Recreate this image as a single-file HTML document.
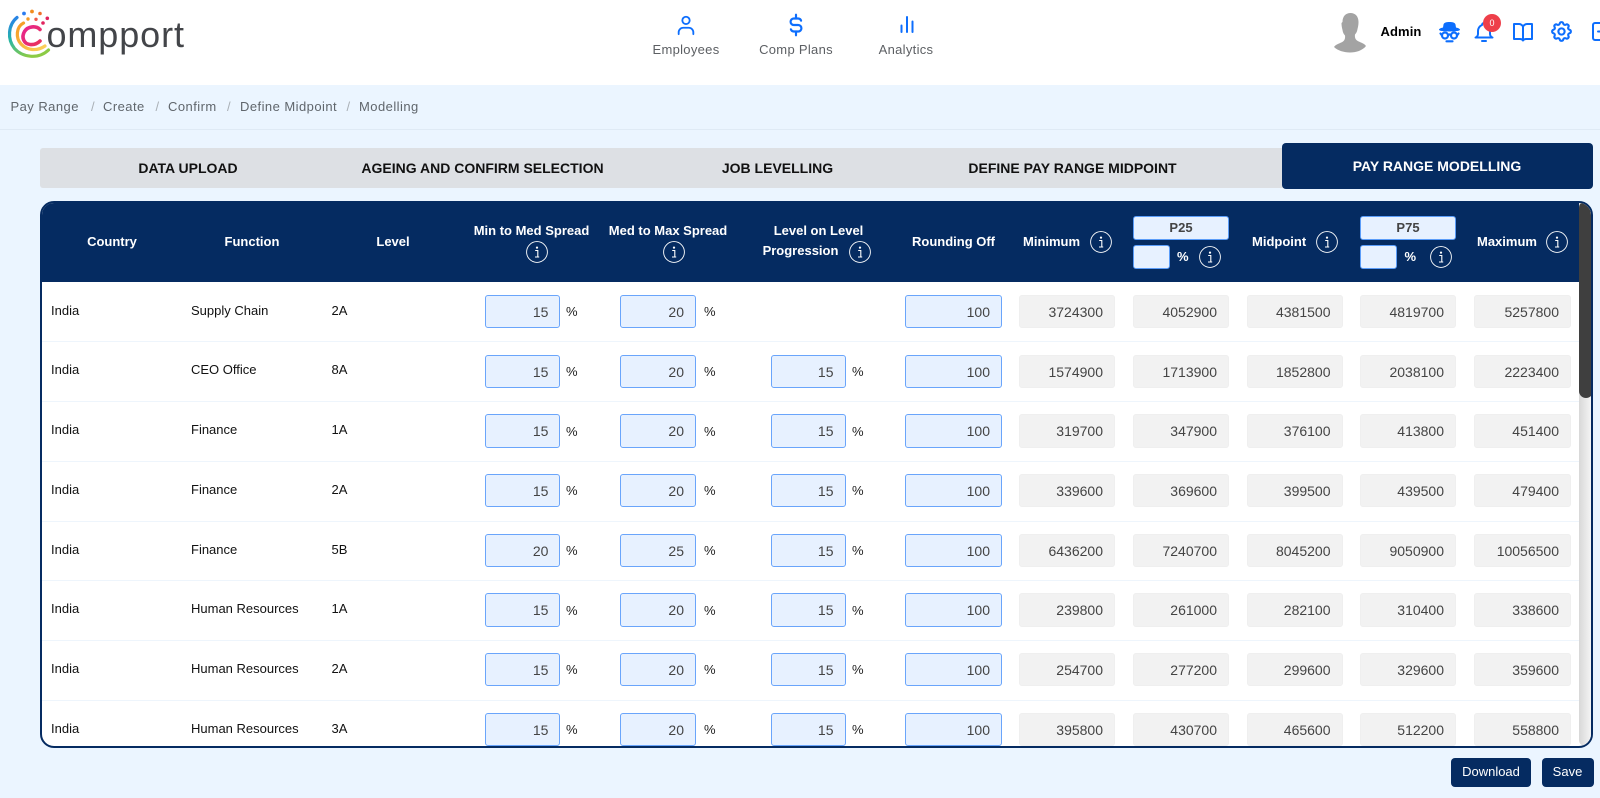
<!DOCTYPE html>
<html lang="en"><head><meta charset="utf-8"><title>Pay Range Modelling</title>
<style>
*{box-sizing:border-box;margin:0;padding:0}
html,body{width:1600px;height:798px;overflow:hidden}
body{background:#ebf5ff;font-family:"Liberation Sans",Arial,sans-serif;position:relative;color:#111}
.a{position:absolute;white-space:nowrap}
.hd{left:0;top:0;width:1600px;height:85px;background:#fff}
.nav{font-size:13px;letter-spacing:.3px;color:#5c5f63;top:42px;line-height:16px;transform:translateX(-50%)}
.bc{font-size:13px;letter-spacing:.45px;color:#60666c;top:99px;line-height:16px}
.bs{color:#a9afb5}
.tabbar{left:40px;top:148px;width:1250px;height:40px;background:#dde0e4;border-radius:3px 0 0 3px}
.tab{font-size:14px;font-weight:700;color:#111;top:160px;line-height:16px;transform:translateX(-50%)}
.act{left:1282px;top:143px;width:311px;height:46px;background:#052b61;border-radius:4px}
.tbl{left:40px;top:201px;width:1553px;height:547px;border:2px solid #052b61;border-radius:14px;overflow:hidden;background:#fff}
.th{left:0;top:0;width:1537px;height:78.7px;background:#052b61}
.h{font-size:13px;font-weight:700;color:#fff;line-height:16px}
.c{transform:translateX(-50%)}
.inf{position:absolute;width:22px;height:22px}
.hb{background:#e7f1ff;border:1px solid #5b9df9;border-radius:3px;color:#444;font-size:13px;font-weight:700;text-align:center}
.r{position:absolute;left:0;width:1537px;height:59.6px;border-top:1px solid #eef5fc}
.r>*{position:absolute}
.t{font-size:13px;line-height:16px;top:20px;color:#111;white-space:nowrap}
.i,.b{top:12.3px;height:33.3px;line-height:32px;font-size:14px;text-align:right;color:#444;padding-right:11px;border-radius:3px}
.i{background:#e7f1ff;border:1px solid #6aa5fb}
.b{width:96px;background:#f2f2f2;border:1px solid #efefef;padding-right:11px}
.p{font-size:13px;top:21.5px;line-height:16px;color:#222}
.i1{left:443.4px;width:75px}.i2{left:578px;width:76px}.i3{left:728.5px;width:75px}.i4{left:863px;width:97px}
.p1{left:524px}.p2{left:662px}.p3{left:810px}
.b1{left:977px}.b2{left:1091px}.b3{left:1204.5px}.b4{left:1318px}.b5{left:1432px;width:97px}
.trk{left:1537px;top:0;width:12px;height:543px;background:linear-gradient(90deg,#d8d8d8,#f4f4f4);border-radius:0 0 7px 7px}
.thm{left:1537px;top:-2px;width:14px;height:197px;background:#3f3f3f;border-radius:7px}
.btn{background:#052b61;color:#fff;font-size:13px;line-height:28px;text-align:center;border-radius:4px;top:758px;height:29px}
svg{position:absolute;overflow:visible}
.ic{fill:none;stroke:#0d6efd;stroke-width:2;stroke-linecap:round;stroke-linejoin:round}
</style></head><body>
<svg width="0" height="0" style="position:absolute"><defs>
<symbol id="inf" viewBox="0 0 22 22"><circle cx="11" cy="11" r="10.4" fill="none" stroke="#fff" stroke-width=".9"/><circle cx="11" cy="6.6" r="1.1" fill="#fff"/><path d="M9.2 9.5h2.6v6.2M9 16h4.2" fill="none" stroke="#fff" stroke-width="1.1"/></symbol>
<linearGradient id="g1" x1="0" y1="0" x2=".5" y2="1"><stop offset="0" stop-color="#2a7bf0"/><stop offset=".45" stop-color="#25b5a8"/><stop offset="1" stop-color="#8ccb45"/></linearGradient>
<linearGradient id="g2" x1="0" y1="0" x2="1" y2="1"><stop offset="0" stop-color="#f59a23"/><stop offset="1" stop-color="#fbd25b"/></linearGradient>
<linearGradient id="g3" x1="0" y1="0" x2="1" y2="1"><stop offset="0" stop-color="#e8268f"/><stop offset="1" stop-color="#e8315a"/></linearGradient>
</defs></svg>

<div class="a hd"></div>
<!-- logo -->
<svg style="left:0;top:0" width="60" height="62" viewBox="0 0 60 62">
<path d="M17 17.500C8 25 7 39 14.500 48.500C22 57 38 60 48.500 50" fill="none" stroke="url(#g1)" stroke-width="3.200" stroke-linecap="round"/>
<path d="M23.500 23C16 27 15.500 38 21 44C27 50.500 37 51.500 45 46" fill="none" stroke="url(#g2)" stroke-width="3.200" stroke-linecap="round"/>
<path d="M40 29.500C36 25.500 28 26 24.500 31.500C21 37.500 24 44 30 44.500C34 45 37.500 43.500 40 41" fill="none" stroke="url(#g3)" stroke-width="3.600" stroke-linecap="round"/>
<circle cx="24" cy="13.500" r="1.900" fill="#2a7bf0"/><circle cx="32" cy="11.500" r="1.900" fill="#f28c1e"/><circle cx="40" cy="13.500" r="1.800" fill="#f0702a"/>
<circle cx="28" cy="19" r="1.700" fill="#f59a23"/><circle cx="36" cy="19.300" r="1.700" fill="#ee5a4a"/><circle cx="47.300" cy="18.300" r="1.800" fill="#e0245e"/><circle cx="43" cy="23" r="1.800" fill="#e0245e"/>
</svg>
<div class="a" style="left:46.500px;top:12.500px;font-size:36px;line-height:44px;letter-spacing:.9px;color:#434549">ompport</div>

<!-- nav -->
<svg class="ic" style="left:675px;top:14px" width="22" height="22" viewBox="0 0 24 24"><path d="M8 7a4 4 0 1 0 8 0a4 4 0 0 0-8 0"/><path d="M4 22v-2a5 5 0 0 1 5-5h6a5 5 0 0 1 5 5v2"/></svg>
<svg class="ic" style="left:783px;top:12px" width="26" height="26" viewBox="0 0 24 24"><path d="M16.700 8a3 3 0 0 0-2.700-2h-4a3 3 0 0 0 0 6h4a3 3 0 0 1 0 6h-4a3 3 0 0 1-2.700-2"/><path d="M12 2.500V6m0 12v3.500"/></svg>
<svg class="ic" style="left:899px;top:15px" width="16" height="19" viewBox="0 0 16 19"><path d="M2.500 10.500V17M8 2v15M13.500 6.500V17"/></svg>
<div class="a nav" style="left:686px">Employees</div>
<div class="a nav" style="left:796px">Comp Plans</div>
<div class="a nav" style="left:906px">Analytics</div>

<!-- user -->
<svg style="left:1334px;top:13px" width="32" height="40" viewBox="0 0 32 40"><path d="M8.500 9C8.500 3 12 0 16.500 0S24.500 3 24.500 9c0 3-.5 5-1 7-.3 2-1 4-2.500 5.500-.3 2 0 4.500 2 6 3 2 7 2.500 9 5.500C28.500 37.500 22 39.500 16 39.500S3.500 37.500 0 34c2-3 6-3.500 9-5.500 2-1.500 2.300-4 2-6-1.500-1.500-2.200-3.500-2.500-5.500-.5-2-1-4-1-7z" fill="#a3a3a3"/></svg>
<div class="a" style="left:1380.500px;top:24px;font-size:13px;font-weight:700;line-height:16px;color:#000;letter-spacing:.1px">Admin</div>
<svg style="left:1439px;top:21px" width="21" height="22" viewBox="0 0 21 22"><path d="M4.500 3.500C5 1.500 7.500 1 10.500 1S16 1.500 16.500 3.500L17 6.500C19 7 21 7.700 21 8.800 21 10 16 10.500 10.500 10.500S0 10 0 8.800C0 7.700 2 7 4 6.500z" fill="#0d6efd"/><g fill="none" stroke="#0d6efd" stroke-width="2.200"><circle cx="6" cy="14.500" r="3"/><circle cx="15" cy="14.500" r="3"/><path d="M9 14c1-.6 2-.6 3 0M3 14.500 1.500 12.500M18 14.500l1.500-2M7.500 20.300h6" stroke-linecap="round"/></g></svg>
<svg class="ic" style="left:1472px;top:20px" width="24" height="24" viewBox="0 0 24 24"><path d="M10 5a2 2 0 1 1 4 0a7 7 0 0 1 4 6v3a4 4 0 0 0 2.500 3.500h-17A4 4 0 0 0 6 14v-3a7 7 0 0 1 4-6"/><path d="M10 21h4"/></svg>
<div class="a" style="left:1483px;top:14px;width:18px;height:18px;border-radius:50%;background:#ee3f4a;color:#fff;font-size:9px;line-height:18px;text-align:center">0</div>
<svg class="ic" style="left:1513px;top:23px" width="20" height="19" viewBox="0 0 20 19"><path d="M10 3.500V17.500M10 3.500C9 2 7.500 1 6 1H1V16H7C8.500 16 9.500 16.500 10 17.500 10.500 16.500 11.500 16 13 16H19V1H14C12.500 1 11 2 10 3.500z"/></svg>
<svg class="ic" style="left:1549px;top:19px" width="25" height="25" viewBox="0 0 24 24"><path d="M10.325 4.317c.426-1.756 2.924-1.756 3.350 0a1.724 1.724 0 0 0 2.573 1.066c1.543-.94 3.310.826 2.370 2.370a1.724 1.724 0 0 0 1.065 2.572c1.756.426 1.756 2.924 0 3.350a1.724 1.724 0 0 0-1.066 2.573c.94 1.543-.826 3.310-2.370 2.370a1.724 1.724 0 0 0-2.572 1.065c-.426 1.756-2.924 1.756-3.350 0a1.724 1.724 0 0 0-2.573-1.066c-1.543.94-3.310-.826-2.370-2.370a1.724 1.724 0 0 0-1.065-2.572c-1.756-.426-1.756-2.924 0-3.350a1.724 1.724 0 0 0 1.066-2.573c-.94-1.543.826-3.310 2.370-2.370.996.608 2.296.07 2.572-1.065z"/><circle cx="12" cy="12" r="3"/></svg>
<svg class="ic" style="left:1592px;top:22px" width="20" height="20" viewBox="0 0 20 20"><path d="M8 1H3a2 2 0 0 0-2 2v13a2 2 0 0 0 2 2h5M6 9.500h6"/></svg>

<!-- breadcrumb -->
<div class="a" style="left:0;top:129px;width:1600px;height:1px;background:#dfeaf5"></div>
<div class="a bc" style="left:10.500px">Pay Range</div><div class="a bc bs" style="left:91px">/</div>
<div class="a bc" style="left:103px">Create</div><div class="a bc bs" style="left:155.500px">/</div>
<div class="a bc" style="left:168px">Confirm</div><div class="a bc bs" style="left:227px">/</div>
<div class="a bc" style="left:240px">Define Midpoint</div><div class="a bc bs" style="left:346.500px">/</div>
<div class="a bc" style="left:359px">Modelling</div>

<!-- tabs -->
<div class="a tabbar"></div>
<div class="a tab" style="left:188px">DATA UPLOAD</div>
<div class="a tab" style="left:482.500px">AGEING AND CONFIRM SELECTION</div>
<div class="a tab" style="left:777.500px">JOB LEVELLING</div>
<div class="a tab" style="left:1072.500px">DEFINE PAY RANGE MIDPOINT</div>
<div class="a act"></div>
<div class="a tab" style="left:1437px;top:158px;color:#fff">PAY RANGE MODELLING</div>

<!-- table -->
<div class="a tbl">
<div class="a th"></div>
<div class="a h c" style="left:70px;top:30.500px">Country</div>
<div class="a h c" style="left:210px;top:30.500px">Function</div>
<div class="a h c" style="left:351px;top:30.500px">Level</div>
<div class="a h c" style="left:489.500px;top:20px">Min to Med Spread</div>
<svg class="inf" style="left:484px;top:38px"><use href="#inf"/></svg>
<div class="a h c" style="left:626px;top:20px">Med to Max Spread</div>
<svg class="inf" style="left:620.500px;top:38px"><use href="#inf"/></svg>
<div class="a h c" style="left:776.500px;top:20px">Level on Level</div>
<div class="a h c" style="left:758.500px;top:40px">Progression</div>
<svg class="inf" style="left:807px;top:38px"><use href="#inf"/></svg>
<div class="a h c" style="left:911.500px;top:30.500px">Rounding Off</div>
<div class="a h" style="left:981px;top:30.500px">Minimum</div>
<svg class="inf" style="left:1048px;top:28px"><use href="#inf"/></svg>
<div class="a hb" style="left:1091px;top:13px;width:96px;height:23.500px;line-height:21px">P25</div>
<div class="a hb" style="left:1091px;top:42.300px;width:37px;height:23.500px"></div>
<div class="a h" style="left:1135px;top:45.500px">%</div>
<svg class="inf" style="left:1157px;top:43px"><use href="#inf"/></svg>
<div class="a h" style="left:1210px;top:30.500px">Midpoint</div>
<svg class="inf" style="left:1274px;top:28px"><use href="#inf"/></svg>
<div class="a hb" style="left:1318px;top:13px;width:96px;height:23.500px;line-height:21px">P75</div>
<div class="a hb" style="left:1318px;top:42.300px;width:37px;height:23.500px"></div>
<div class="a h" style="left:1362.500px;top:45.500px">%</div>
<svg class="inf" style="left:1388px;top:43px"><use href="#inf"/></svg>
<div class="a h" style="left:1435px;top:30.500px">Maximum</div>
<svg class="inf" style="left:1504px;top:28px"><use href="#inf"/></svg>

<div class="r" style="top:78.700px;border-top-color:transparent"><div class="t" style="left:9px">India</div><div class="t" style="left:149px">Supply Chain</div><div class="t" style="left:289.500px">2A</div><div class="i i1">15</div><div class="p p1">%</div><div class="i i2">20</div><div class="p p2">%</div><div class="i i4">100</div><div class="b b1">3724300</div><div class="b b2">4052900</div><div class="b b3">4381500</div><div class="b b4">4819700</div><div class="b b5">5257800</div></div>

<div class="r" style="top:138.400px"><div class="t" style="left:9px">India</div><div class="t" style="left:149px">CEO Office</div><div class="t" style="left:289.500px">8A</div><div class="i i1">15</div><div class="p p1">%</div><div class="i i2">20</div><div class="p p2">%</div><div class="i i3">15</div><div class="p p3">%</div><div class="i i4">100</div><div class="b b1">1574900</div><div class="b b2">1713900</div><div class="b b3">1852800</div><div class="b b4">2038100</div><div class="b b5">2223400</div></div>

<div class="r" style="top:198.100px"><div class="t" style="left:9px">India</div><div class="t" style="left:149px">Finance</div><div class="t" style="left:289.500px">1A</div><div class="i i1">15</div><div class="p p1">%</div><div class="i i2">20</div><div class="p p2">%</div><div class="i i3">15</div><div class="p p3">%</div><div class="i i4">100</div><div class="b b1">319700</div><div class="b b2">347900</div><div class="b b3">376100</div><div class="b b4">413800</div><div class="b b5">451400</div></div>

<div class="r" style="top:257.800px"><div class="t" style="left:9px">India</div><div class="t" style="left:149px">Finance</div><div class="t" style="left:289.500px">2A</div><div class="i i1">15</div><div class="p p1">%</div><div class="i i2">20</div><div class="p p2">%</div><div class="i i3">15</div><div class="p p3">%</div><div class="i i4">100</div><div class="b b1">339600</div><div class="b b2">369600</div><div class="b b3">399500</div><div class="b b4">439500</div><div class="b b5">479400</div></div>

<div class="r" style="top:317.500px"><div class="t" style="left:9px">India</div><div class="t" style="left:149px">Finance</div><div class="t" style="left:289.500px">5B</div><div class="i i1">20</div><div class="p p1">%</div><div class="i i2">25</div><div class="p p2">%</div><div class="i i3">15</div><div class="p p3">%</div><div class="i i4">100</div><div class="b b1">6436200</div><div class="b b2">7240700</div><div class="b b3">8045200</div><div class="b b4">9050900</div><div class="b b5">10056500</div></div>

<div class="r" style="top:377.200px"><div class="t" style="left:9px">India</div><div class="t" style="left:149px">Human Resources</div><div class="t" style="left:289.500px">1A</div><div class="i i1">15</div><div class="p p1">%</div><div class="i i2">20</div><div class="p p2">%</div><div class="i i3">15</div><div class="p p3">%</div><div class="i i4">100</div><div class="b b1">239800</div><div class="b b2">261000</div><div class="b b3">282100</div><div class="b b4">310400</div><div class="b b5">338600</div></div>

<div class="r" style="top:436.900px"><div class="t" style="left:9px">India</div><div class="t" style="left:149px">Human Resources</div><div class="t" style="left:289.500px">2A</div><div class="i i1">15</div><div class="p p1">%</div><div class="i i2">20</div><div class="p p2">%</div><div class="i i3">15</div><div class="p p3">%</div><div class="i i4">100</div><div class="b b1">254700</div><div class="b b2">277200</div><div class="b b3">299600</div><div class="b b4">329600</div><div class="b b5">359600</div></div>

<div class="r" style="top:496.600px"><div class="t" style="left:9px">India</div><div class="t" style="left:149px">Human Resources</div><div class="t" style="left:289.500px">3A</div><div class="i i1">15</div><div class="p p1">%</div><div class="i i2">20</div><div class="p p2">%</div><div class="i i3">15</div><div class="p p3">%</div><div class="i i4">100</div><div class="b b1">395800</div><div class="b b2">430700</div><div class="b b3">465600</div><div class="b b4">512200</div><div class="b b5">558800</div></div>

<div class="a trk"></div>
<div class="a thm"></div>
</div>

<div class="a btn" style="left:1451px;width:80px">Download</div>
<div class="a btn" style="left:1541.500px;width:52px">Save</div>
</body></html>
